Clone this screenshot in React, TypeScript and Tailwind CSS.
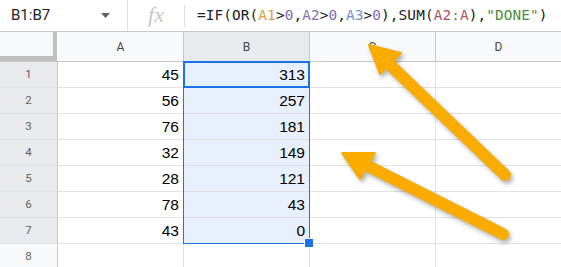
import React from "react";

const rowsA = [45, 56, 76, 32, 28, 78, 43];
const rowsB = [313, 257, 181, 149, 121, 43, 0];

function Formula() {
  const o = "text-[#e69a3c]";
  const p = "text-[#8a6fae]";
  const b = "text-[#6d8fcf]";
  const n = "text-[#7b6bb3]";
  const m = "text-[#a5546f]";
  const g = "text-[#4f8a3c]";
  return (
    <span className="text-[#202124]">
      =IF(OR(<span className={o}>A1</span>&gt;<span className={n}>0</span>,<span className={p}>A2</span>&gt;<span className={n}>0</span>,<span className={b}>A3</span>&gt;<span className={n}>0</span>),SUM(<span className={m}>A2:A</span>),<span className={g}>"DONE"</span>)
    </span>
  );
}

export default function App() {
  return (
    <div className="relative w-[561px] h-[267px] overflow-hidden bg-white" style={{ fontFamily: "Roboto, 'Liberation Sans', sans-serif" }}>
      {/* formula bar */}
      <div className="flex h-[32px] border-b border-[#c7c7c7] items-center">
        <div className="flex items-center w-[128px] h-full border-r border-[#e0e0e0]">
          <span className="pl-[11px] text-[15px] text-[#202124] w-[100px]">B1:B7</span>
          <svg width="9" height="5" viewBox="0 0 9 5" className="ml-[1px]">
            <path d="M0 0 L9 0 L4.5 5 Z" fill="#5f6368" />
          </svg>
        </div>
        <div className="flex items-center justify-center w-[57px] h-[22px] border-r border-[#e0e0e0]">
          <span className="italic text-[22px] text-[#c4c7c5] leading-none -mt-[2px]" style={{ fontFamily: "'Liberation Serif', serif" }}>fx</span>
        </div>
        <div className="pl-[12px] text-[14.4px] tracking-[0.1px]" style={{ fontFamily: "'DejaVu Sans Mono', 'Liberation Mono', monospace" }}>
          <Formula />
        </div>
      </div>

      {/* header row */}
      <div className="flex h-[30px] border-b border-[#c7c7c7] text-[12px] text-[#444746]">
        <div className="w-[58px] h-full bg-[#f8f9fa] flex flex-col">
          <div className="flex flex-1">
            <div className="flex-1 bg-[#f8f9fa]" />
            <div className="w-[4px] bg-[#c0c0c0]" />
            <div className="w-[1px] bg-white" />
          </div>
          <div className="h-[5px] bg-[#c0c0c0] w-[57px]" />
        </div>
        <div className="w-[126px] h-full bg-[#f8f9fa] border-r border-[#c7c7c7] flex items-center justify-center">A</div>
        <div className="w-[126px] h-full bg-[#e8eaed] border-r border-[#c7c7c7] flex items-center justify-center">B</div>
        <div className="w-[126px] h-full bg-[#f8f9fa] border-r border-[#c7c7c7] flex items-center justify-center">C</div>
        <div className="flex-1 h-full bg-[#f8f9fa] flex items-center justify-center">D</div>
      </div>

      {/* body rows */}
      {[0, 1, 2, 3, 4, 5, 6, 7].map((i) => {
        const sel = i < 7;
        return (
          <div key={i} className="flex h-[26px] border-b border-[#e1e1e1]">
            <div className={`w-[58px] h-full border-r border-[#c7c7c7] flex items-center justify-center text-[11.5px] text-[#5f6368] ${sel ? "bg-[#e8eaed]" : "bg-[#f8f9fa]"}`}>
              {i + 1}
            </div>
            <div className="w-[126px] h-full border-r border-[#e1e1e1] flex items-center justify-end pr-[4px] text-[15.5px] text-black" style={{ fontFamily: "'Liberation Sans', Arial, sans-serif" }}>
              {sel ? rowsA[i] : ""}
            </div>
            <div className={`relative w-[126px] h-full border-r border-[#e1e1e1] flex items-center justify-end pr-[4px] text-[15.5px] text-black ${sel ? "bg-[#e8f0fe]" : ""}`} style={{ fontFamily: "'Liberation Sans', Arial, sans-serif" }}>
              {sel ? rowsB[i] : ""}
            </div>
            <div className="w-[126px] h-full border-r border-[#e1e1e1]" />
            <div className="flex-1 h-full" />
          </div>
        );
      })}

      {/* selection overlay */}
      <div className="absolute left-[183px] top-[61px] w-[127px] h-[183px] border border-[#1a73e8] pointer-events-none" />
      <div className="absolute left-[183px] top-[61px] w-[127px] h-[27px] border-2 border-[#1a73e8] pointer-events-none" />
      <div className="absolute left-[304px] top-[238px] w-[10px] h-[10px] bg-[#1a73e8] border border-white" />

      {/* arrows */}
      <svg className="absolute left-0 top-0 pointer-events-none" width="561" height="267" style={{ filter: "drop-shadow(2px 3px 2px rgba(0,0,0,0.3))" }}>
        <g fill="#f9ab00" stroke="#f9ab00" strokeLinejoin="round">
          <line x1="505" y1="175" x2="386" y2="61" strokeWidth="12" strokeLinecap="round" />
          <polygon points="369,45 401,53 380,74" strokeWidth="2" />
          <line x1="503" y1="234" x2="362" y2="163" strokeWidth="12" strokeLinecap="round" />
          <polygon points="342,153 375,153 360,179" strokeWidth="2" />
        </g>
      </svg>
    </div>
  );
}
